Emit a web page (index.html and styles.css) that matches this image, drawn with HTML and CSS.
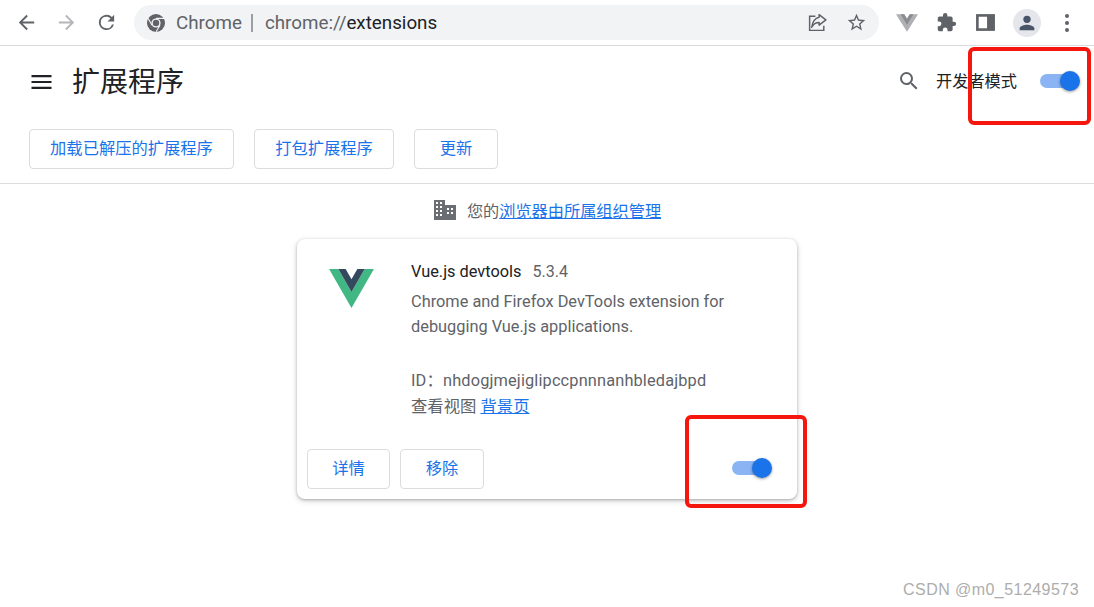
FILE: index.html

```html
<!DOCTYPE html>
<html lang="zh-CN">
<head>
  <meta charset="UTF-8">
  <title>扩展程序</title>
  <link rel="stylesheet" href="styles.css">
</head>
<body>
  <div class="toolbar">
    <svg class="nav-icon" viewBox="0 0 24 24" fill="#5f6368"><path d="M20 11H7.8l5.6-5.6L12 4l-8 8 8 8 1.4-1.4L7.8 13H20z"/></svg>
    <svg class="nav-icon nav-off" viewBox="0 0 24 24" fill="#b4b6b9"><path d="M4 11h12.2l-5.6-5.6L12 4l8 8-8 8-1.4-1.4 5.6-5.6H4z"/></svg>
    <svg class="nav-icon" viewBox="0 0 24 24" fill="#5f6368"><path d="M17.65 6.35A8 8 0 0 0 4 12a8 8 0 0 0 15.73 2h-2.08A6 6 0 1 1 12 6c1.66 0 3.14.69 4.22 1.78L13 11h7V4z"/></svg>
    <div class="omnibox">
      <svg class="chrome-icon" viewBox="0 0 20 20"><circle cx="10" cy="10" r="9" fill="#5f6368"/><circle cx="10" cy="10" r="4.6" fill="#f1f3f4"/><circle cx="10" cy="10" r="3.2" fill="#5f6368"/><path d="M10 5.4h8M6 12.3 2.2 5.6M14 12.3 10 19" stroke="#f1f3f4" stroke-width="1.1"/></svg>
      <span class="site-chip">Chrome</span>
      <span class="omni-sep"></span>
      <span class="url"><span class="url-scheme">chrome://</span>extensions</span>
      <span class="omni-right">
        <svg class="omni-icon" viewBox="0 0 20 20" fill="none" stroke="#5f6368" stroke-width="1.4"><path d="M8 4H2.5v13.5H16V13"/><path d="M11.5 2.5 18 7.5l-6.500 5V10C8 10 6 11.500 4.500 14.500 5 10 7.500 5.500 11.500 5z" stroke-linejoin="round"/></svg>
        <svg class="omni-icon" viewBox="0 0 24 24" fill="#5f6368"><path d="m22 9.240-7.190-.62L12 2 9.190 8.630 2 9.240l5.460 4.730L5.820 21 12 17.270 18.180 21l-1.630-7.030zM12 15.400l-3.760 2.270 1-4.280-3.320-2.880 4.380-.38L12 6.100l1.710 4.040 4.380.38-3.320 2.880 1 4.280z"/></svg>
      </span>
    </div>
    <div class="toolbar-right">
      <svg class="vue-gray" viewBox="0 0 24 20"><path d="M0 1h9l3 5 3-5h9L12 20z" fill="#aeb0b3"/><path d="M5 1h4l3 5 3-5h4l-7 11.500z" fill="#8a8c90"/></svg>
      <svg class="tool-icon" viewBox="0 0 24 24" fill="#5f6368"><path d="M20.500 11H19V7a2 2 0 0 0-2-2h-4V3.500a2.500 2.500 0 0 0-5 0V5H4a2 2 0 0 0-2 2v3.800h1.500a2.700 2.700 0 0 1 0 5.400H2V20a2 2 0 0 0 2 2h3.800v-1.500a2.700 2.700 0 0 1 5.400 0V22H17a2 2 0 0 0 2-2v-4h1.500a2.500 2.500 0 0 0 0-5z"/></svg>
      <svg class="tool-icon" viewBox="0 0 20 20"><path d="M1 2h18v16H1z" fill="#5f6368"/><path d="M3.500 4.500h8v11h-8z" fill="#fff"/></svg>
      <span class="avatar">
        <svg viewBox="0 0 24 24" fill="#4b5568"><circle cx="12" cy="8" r="4"/><path d="M4 20v-2c0-2.700 5.300-4 8-4s8 1.300 8 4v2z"/></svg>
      </span>
      <svg class="menu-dots" viewBox="0 0 6 20" fill="#5f6368"><circle cx="3" cy="3" r="2"/><circle cx="3" cy="10" r="2"/><circle cx="3" cy="17" r="2"/></svg>
    </div>
  </div>

  <div class="page-head">
    <svg class="hamburger" viewBox="0 0 20 14" fill="#202124"><path d="M0 0h20v2.200H0zM0 5.900h20v2.200H0zM0 11.800h20V14H0z"/></svg>
    <h1>扩展程序</h1>
    <svg class="search-icon" viewBox="0 0 24 24" fill="#5f6368"><path d="M15.5 14h-.79l-.28-.27A6.471 6.471 0 0 0 16 9.500 6.500 6.500 0 1 0 9.500 16c1.610 0 3.090-.59 4.230-1.570l.27.28v.79l5 4.990L20.490 19l-4.990-5zm-6 0C7.010 14 5 11.990 5 9.500S7.010 5 9.500 5 14 7.010 14 9.500 11.990 14 9.500 14z"/></svg>
    <span class="dev-label">开发者模式</span>
    <span class="toggle toggle-head"><span class="knob"></span></span>
  </div>

  <div class="action-row">
    <button class="btn btn-load">加载已解压的扩展程序</button>
    <button class="btn btn-pack">打包扩展程序</button>
    <button class="btn btn-update">更新</button>
  </div>

  <div class="managed">
    <svg class="building" viewBox="0 0 22 20" fill="#6a6d71"><path fill-rule="evenodd" d="M0 0h11v5h11v15H0zM2 2v2h2V2zm4 0v2h2V2zM2 6v2h2V6zm4 0v2h2V6zM2 10v2h2v-2zm4 0v2h2v-2zM2 14v2h2v-2zm4 0v2h2v-2zm7-6v2h2V8zm4 0v2h2V8zm-4 4v2h2v-2zm4 0v2h2v-2z"/></svg>
    <span>您的<a href="#">浏览器由所属组织管理</a></span>
  </div>

  <div class="card">
    <div class="card-body">
      <svg class="vue-logo" viewBox="0 0 46 40"><path d="M0 0h9.500L23 23.500 36.500 0H46L23 40z" fill="#41b883"/><path d="M9.500 0H17l6 10.500L29 0h7.500L23 23.500z" fill="#35495e"/></svg>
      <div class="card-text">
        <div class="ext-title"><span class="ext-name">Vue.js devtools</span><span class="ext-version">5.3.4</span></div>
        <p class="ext-desc">Chrome and Firefox DevTools extension for debugging Vue.js applications.</p>
        <p class="ext-id">ID：nhdogjmejiglipccpnnnanhbledajbpd</p>
        <p class="ext-views">查看视图 <a href="#">背景页</a></p>
      </div>
    </div>
    <div class="card-foot">
      <button class="btn btn-detail">详情</button>
      <button class="btn btn-remove">移除</button>
      <span class="toggle toggle-card"><span class="knob"></span></span>
    </div>
  </div>

  <div class="mark mark-top"></div>
  <div class="mark mark-card"></div>
  <div class="watermark">CSDN @m0_51249573</div>
</body>
</html>
```

FILE: styles.css

```css
* { box-sizing: border-box; }
body { margin: 0; height: 607px; overflow: hidden; background: white; font-family: Roboto, "Noto Sans CJK SC", sans-serif; color: #202124; }
button { font-family: inherit; }
p { margin: 0; }

.toolbar { display: flex; align-items: center; height: 46px; border-bottom: 1px solid #dadce0; padding: 0 0 0 15px; }
.nav-icon { width: 23px; height: 23px; margin-right: 17px; flex: none; }
.nav-off { margin-right: 17px; }
.omnibox { display: flex; align-items: center; width: 745px; height: 35px; margin-left: -1px; background: #f1f3f4; border-radius: 18px; padding: 0 12px; }
.chrome-icon { width: 20px; height: 20px; margin-right: 10px; flex: none; }
.site-chip { font-size: 18.8px; color: #5f6368; }
.omni-sep { width: 2px; height: 18px; background: #9a9ea3; margin: 0 12px 0 9px; }
.url { font-size: 18.8px; color: #202124; }
.url-scheme { color: #5f6368; }
.omni-right { display: flex; align-items: center; gap: 18px; margin-left: auto; }
.omni-icon { width: 21px; height: 21px; }
.toolbar-right { display: flex; align-items: center; margin-left: 17px; }
.vue-gray { width: 22px; height: 19px; margin-right: 18px; }
.tool-icon { width: 21px; height: 21px; margin-right: 18px; }
.avatar { display: flex; width: 28px; height: 28px; border-radius: 50%; background: #e4e6eb; padding: 3px; margin-right: 23px; margin-left: -1px; }
.menu-dots { width: 6px; height: 20px; }

.page-head { display: flex; align-items: center; height: 73px; padding: 0 14px 2px 31px; }
.hamburger { width: 21px; height: 14px; margin-right: 20px; }
h1 { margin: 2px 0 0; font-size: 28px; font-weight: 400; line-height: 36px; }
.search-icon { width: 24px; height: 24px; margin-left: auto; margin-right: 15px; margin-bottom: 2px; }
.dev-label { font-size: 16.2px; margin-right: 23px; margin-bottom: 4px; }
.toggle-head { margin-bottom: 2px; }

.toggle { position: relative; display: block; width: 40px; height: 20px; }
.toggle::before { content: ""; position: absolute; left: 0; top: 3px; width: 36px; height: 14px; border-radius: 7px; background: #8ab4f4; }
.knob { position: absolute; right: 0; top: 0; width: 20px; height: 20px; border-radius: 50%; background: #1a73e8; box-shadow: 0 1px 3px rgba(0,0,0,0.4); }

.action-row { display: flex; gap: 20px; padding: 10px 0 14px 29px; border-bottom: 1px solid #dadce0; height: 65px; }
.btn { height: 40px; background: white; border: 1px solid #dadce0; border-radius: 4px; color: #1a73e8; font-size: 16.3px; padding: 0 0 4px; }
.btn-load { width: 205px; }
.btn-pack { width: 140px; }
.btn-update { width: 84px; }

.managed { display: flex; align-items: center; justify-content: center; height: 55px; padding: 0 0 4px 1px; font-size: 16.2px; color: #5f6368; }
.managed a, .ext-views a { color: #1a73e8; }
.building { width: 22px; height: 20px; margin-right: 11px; }

.card { width: 500px; height: 260px; margin: 0 0 0 297px; border-radius: 8px; background: white; box-shadow: 0 1px 3px rgba(60,64,67,0.35), 0 2px 6px rgba(60,64,67,0.18); display: flex; flex-direction: column; }
.card-body { display: flex; flex: 1; padding: 30px 0 0 32px; }
.vue-logo { width: 45px; height: 39px; margin-right: 37px; flex: none; }
.card-text { width: 330px; margin-top: -9px; font-size: 16.35px; color: #5f6368; }
.ext-title { line-height: 24px; margin-bottom: 5px; }
.ext-name { color: #202124; }
.ext-version { margin-left: 11px; font-size: 16px; }
.ext-desc { line-height: 25px; margin-bottom: 30px; }
.ext-id { line-height: 24px; margin-bottom: 2px; letter-spacing: 0.15px; }
.ext-views { line-height: 24px; }
.card-foot { display: flex; align-items: center; gap: 10px; padding: 0 25px 10px 10px; }
.btn-detail { width: 83px; }
.btn-remove { width: 84px; }
.toggle-card { margin-left: auto; margin-bottom: 2px; }

.mark { position: absolute; border: 4px solid #f5170e; border-radius: 6px; }
.mark-top { left: 968px; top: 47px; width: 123px; height: 78px; }
.mark-card { left: 685px; top: 415px; width: 122px; height: 93px; }
.watermark { position: absolute; right: 15px; top: 581px; font-family: "Liberation Sans", sans-serif; font-size: 16px; letter-spacing: 0.45px; color: #adadad; }
```
